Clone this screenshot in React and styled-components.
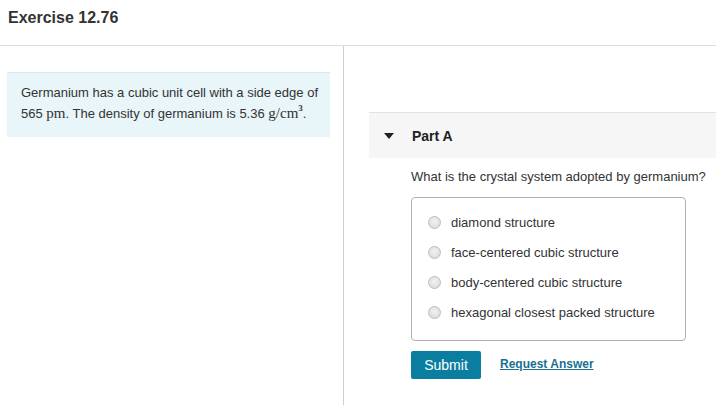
import styled, { createGlobalStyle } from "styled-components";

const GlobalStyle = createGlobalStyle`
    body {
        margin: 0;
        font-family: "Liberation Sans", Arial, sans-serif;
        color: #333;
        background: #fff;
    }
`;

const Page = styled.div`
    width: 716px;
    height: 405px;
    overflow: hidden;
`;

const Header = styled.div`
    height: 45px;
    border-bottom: 1px solid #dcdcdc;
    display: flex;
    align-items: center;
    padding: 0 8px;
`;

const Title = styled.h1`
    margin: -10px 0 0;
    font-size: 16px;
    font-weight: bold;
    color: #333;
`;

const Body = styled.div`
    display: flex;
    height: 359px;
`;

const LeftColumn = styled.div`
    width: 344px;
    border-right: 1px solid #c9d0d6;
    padding: 26px 13px 0 7px;
    box-sizing: border-box;
`;

const Intro = styled.div`
    background: #e8f5f9;
    border-top: 1px solid #d9e8ee;
    padding: 10px 6px 13px 14px;
    font-size: 13px;
    line-height: 20px;
    color: #333;
    white-space: nowrap;
`;

const MathText = styled.span`
    font-family: "Liberation Serif", "Times New Roman", serif;
    font-size: 15px;
`;

const Sup = styled.sup`
    font-size: 9px;
    line-height: 0;
    vertical-align: 7px;
    font-weight: bold;
`;

const RightColumn = styled.div`
    flex: 1;
    padding-top: 66px;
    padding-left: 25px;
`;

const PartHeader = styled.div`
    height: 45px;
    background: #f6f6f6;
    border-top: 1px solid #e2e2e2;
    display: flex;
    align-items: center;
    padding-left: 15px;
    gap: 18px;
`;

const Caret = styled.span`
    width: 0;
    height: 0;
    border-left: 5px solid transparent;
    border-right: 5px solid transparent;
    border-top: 6px solid #222;
`;

const PartTitle = styled.span`
    font-size: 14px;
    font-weight: bold;
    color: #222;
`;

const PartBody = styled.div`
    padding-left: 42px;
    padding-top: 11px;
`;

const Question = styled.p`
    margin: 0 0 12px;
    font-size: 13px;
    line-height: 16px;
    color: #333;
`;

const Options = styled.div`
    width: 275px;
    height: 144px;
    box-sizing: border-box;
    border: 1px solid #b0b0b0;
    border-radius: 4px;
    padding: 9px 0 0 16px;
    display: flex;
    flex-direction: column;
`;

const Option = styled.label`
    display: flex;
    align-items: center;
    height: 30px;
    gap: 10px;
    font-size: 13px;
    color: #333;
`;

const Radio = styled.span`
    width: 11px;
    height: 11px;
    border-radius: 50%;
    border: 1px solid #bcbcbc;
    background: radial-gradient(circle at 50% 40%, #f2f2f2, #d6d6d6);
`;

const Actions = styled.div`
    display: flex;
    align-items: center;
    gap: 19px;
    margin-top: 10px;
`;

const SubmitButton = styled.button`
    width: 70px;
    height: 28px;
    border: none;
    border-radius: 2px;
    background: #0a7ea0;
    color: #fff;
    font-family: "Liberation Sans", Arial, sans-serif;
    font-size: 14px;
    padding: 0;
`;

const RequestLink = styled.a`
    font-size: 12px;
    font-weight: bold;
    color: #1b6f92;
    text-decoration: underline;
    margin-top: -2px;
`;

const options = [
    "diamond structure",
    "face-centered cubic structure",
    "body-centered cubic structure",
    "hexagonal closest packed structure",
];

const App = () => {
    return (
        <Page>
            <GlobalStyle />
            <Header>
                <Title>Exercise 12.76</Title>
            </Header>
            <Body>
                <LeftColumn>
                    <Intro>
                        Germanium has a cubic unit cell with a side edge of
                        <br />
                        565 <MathText>pm</MathText>. The density of germanium is 5.36{" "}
                        <MathText>
                            g/cm<Sup>3</Sup>
                        </MathText>
                        .
                    </Intro>
                </LeftColumn>
                <RightColumn>
                    <PartHeader>
                        <Caret />
                        <PartTitle>Part A</PartTitle>
                    </PartHeader>
                    <PartBody>
                        <Question>What is the crystal system adopted by germanium?</Question>
                        <Options>
                            {options.map((o) => (
                                <Option key={o}>
                                    <Radio />
                                    {o}
                                </Option>
                            ))}
                        </Options>
                        <Actions>
                            <SubmitButton>Submit</SubmitButton>
                            <RequestLink href="#">Request Answer</RequestLink>
                        </Actions>
                    </PartBody>
                </RightColumn>
            </Body>
        </Page>
    );
};

export default App;
